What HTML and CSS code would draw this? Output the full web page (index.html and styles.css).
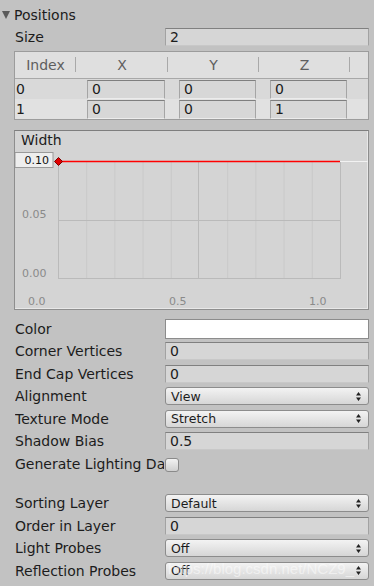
FILE: index.html
```html
<!DOCTYPE html>
<html>
<head>
<meta charset="utf-8">
<link rel="stylesheet" href="styles.css">
</head>
<body>
<div class="inspector">
  <div class="foldout"><span class="tri"></span><span>Positions</span></div>
  <div class="prop"><span class="label">Size</span><div class="field">2</div></div>

  <div class="table">
    <div class="trow head">
      <div class="hc c-idx">Index</div>
      <div class="hc c-col">X</div>
      <div class="hc c-col">Y</div>
      <div class="hc c-col">Z</div>
      <div class="c-rest"></div>
    </div>
    <div class="trow r0">
      <div class="c-idx idx">0</div>
      <div class="c-col cell"><div class="tfield">0</div></div>
      <div class="c-col cell"><div class="tfield">0</div></div>
      <div class="c-col cell"><div class="tfield">0</div></div>
      <div class="c-rest"></div>
    </div>
    <div class="trow r1">
      <div class="c-idx idx">1</div>
      <div class="c-col cell"><div class="tfield">0</div></div>
      <div class="c-col cell"><div class="tfield">0</div></div>
      <div class="c-col cell"><div class="tfield">1</div></div>
      <div class="c-rest"></div>
    </div>
  </div>

  <div class="curve">
    <div class="curve-title">Width</div>
    <svg class="graph" width="353" height="160" viewBox="0 0 353 160">
      <g stroke="#c9c9c9" stroke-width="1">
        <line x1="71.7" y1="12" x2="71.7" y2="129"/>
        <line x1="99.9" y1="12" x2="99.9" y2="129"/>
        <line x1="128.1" y1="12" x2="128.1" y2="129"/>
        <line x1="156.3" y1="12" x2="156.3" y2="129"/>
        <line x1="212.7" y1="12" x2="212.7" y2="129"/>
        <line x1="240.9" y1="12" x2="240.9" y2="129"/>
        <line x1="269.1" y1="12" x2="269.1" y2="129"/>
        <line x1="297.3" y1="12" x2="297.3" y2="129"/>
      </g>
      <g stroke="#bababa" stroke-width="1">
        <line x1="183.5" y1="12" x2="183.5" y2="129"/>
        <line x1="43.5" y1="71.5" x2="325.5" y2="71.5"/>
        <line x1="43.5" y1="12" x2="43.5" y2="129.5"/>
        <line x1="43" y1="129.5" x2="326" y2="129.5"/>
        <line x1="325.5" y1="12" x2="325.5" y2="129.5"/>
      </g>
      <line x1="325" y1="12.5" x2="353" y2="12.5" stroke="#f2f2f2" stroke-width="1"/>
      <line x1="43" y1="12.5" x2="325" y2="12.5" stroke="#ff0000" stroke-width="1.3"/>
      <rect x="0" y="3.5" width="38" height="15" fill="#eeeeee" stroke="#9a9a9a" stroke-width="1"/>
      <text x="34" y="15" text-anchor="end" class="tick-dark">0.10</text>
      <path d="M43.5 8.5 L47.5 12.5 L43.5 16.5 L39.5 12.5 Z" fill="#e00000" stroke="#7a0000" stroke-width="1"/>
      <text x="7" y="69" class="tick">0.05</text>
      <text x="7" y="128" class="tick">0.00</text>
      <text x="13" y="156" class="tick">0.0</text>
      <text x="154" y="156" class="tick">0.5</text>
      <text x="294" y="156" class="tick">1.0</text>
    </svg>
  </div>

  <div class="props">
    <div class="prop"><span class="label">Color</span><div class="field color"></div></div>
    <div class="prop"><span class="label">Corner Vertices</span><div class="field">0</div></div>
    <div class="prop"><span class="label">End Cap Vertices</span><div class="field">0</div></div>
    <div class="prop"><span class="label">Alignment</span><div class="popup"><span>View</span><svg class="arrows" width="5" height="9" viewBox="0 0 5 9"><path d="M2.5 0 L5 3.5 L0 3.5 Z M0 5.5 L5 5.5 L2.5 9 Z" fill="#222"/></svg></div></div>
    <div class="prop"><span class="label">Texture Mode</span><div class="popup"><span>Stretch</span><svg class="arrows" width="5" height="9" viewBox="0 0 5 9"><path d="M2.5 0 L5 3.5 L0 3.5 Z M0 5.5 L5 5.5 L2.5 9 Z" fill="#222"/></svg></div></div>
    <div class="prop"><span class="label">Shadow Bias</span><div class="field">0.5</div></div>
    <div class="prop"><span class="label">Generate Lighting Data</span><div class="check"></div></div>
    <div class="spacer"></div>
    <div class="prop"><span class="label">Sorting Layer</span><div class="popup"><span>Default</span><svg class="arrows" width="5" height="9" viewBox="0 0 5 9"><path d="M2.5 0 L5 3.5 L0 3.5 Z M0 5.5 L5 5.5 L2.5 9 Z" fill="#222"/></svg></div></div>
    <div class="prop"><span class="label">Order in Layer</span><div class="field">0</div></div>
    <div class="prop"><span class="label">Light Probes</span><div class="popup"><span>Off</span><svg class="arrows" width="5" height="9" viewBox="0 0 5 9"><path d="M2.5 0 L5 3.5 L0 3.5 Z M0 5.5 L5 5.5 L2.5 9 Z" fill="#222"/></svg></div></div>
    <div class="prop"><span class="label">Reflection Probes</span><div class="popup"><span>Off</span><svg class="arrows" width="5" height="9" viewBox="0 0 5 9"><path d="M2.5 0 L5 3.5 L0 3.5 Z M0 5.5 L5 5.5 L2.5 9 Z" fill="#222"/></svg></div></div>
  </div>
</div>
<div class="watermark">https://blog.csdn.net/NCZ9_</div>
</body>
</html>
```
FILE: styles.css
```css
html, body {
  margin: 0;
  padding: 0;
}
body {
  background: #c2c2c2;
  font-family: "DejaVu Sans", sans-serif;
  font-size: 14px;
  color: #1c1c1c;
  width: 374px;
  height: 586px;
  overflow: hidden;
  position: relative;
}
.inspector {
  display: flex;
  flex-direction: column;
}
.foldout {
  height: 22px;
  margin-top: 4px;
  display: flex;
  align-items: center;
  padding-left: 2px;
}
.tri {
  width: 0;
  height: 0;
  border-left: 4.5px solid transparent;
  border-right: 4.5px solid transparent;
  border-top: 8px solid #5a5a5a;
  margin-right: 4px;
}
.prop {
  display: flex;
  align-items: center;
  height: 22.5px;
  padding-left: 15px;
  padding-right: 5px;
}
.label {
  width: 149px;
  margin-right: 1px;
  flex: none;
  white-space: nowrap;
  overflow: hidden;
}
.field {
  flex: 1;
  height: 18px;
  box-sizing: border-box;
  background: #d6d6d6;
  border: 1px solid #a2a2a2;
  border-top-color: #808080;
  border-bottom-color: #c8c8c8;
  padding-left: 4px;
  display: flex;
  align-items: center;
}
.field.color {
  background: #ffffff;
  height: 20px;
  border-color: #8c8c8c;
}
.popup {
  flex: 1;
  height: 18px;
  box-sizing: border-box;
  border: 1px solid #8c8c8c;
  border-radius: 3px;
  background: linear-gradient(#f3f3f3, #d6d6d6);
  font-size: 12.5px;
  padding: 0 7px 0 5px;
  display: flex;
  align-items: center;
  justify-content: space-between;
}
.arrows {
  display: block;
}
.check {
  width: 14px;
  height: 14px;
  box-sizing: border-box;
  border: 1px solid #8a8a8a;
  border-radius: 3px;
  background: linear-gradient(#f2f2f2, #cfcfcf);
  margin-top: 3px;
}
.spacer {
  height: 17px;
}

/* table */
.table {
  margin: 2px 5px 0 14px;
  border: 1px solid #9c9c9c;
  background: #dfdfdf;
}
.trow {
  display: flex;
}
.trow.head {
  height: 26px;
  border-bottom: 1px solid #a8a8a8;
  background: #dfdfdf;
  color: #5e5e5e;
}
.trow.r0 {
  height: 20px;
  background: #d9d9d9;
}
.trow.r1 {
  height: 20px;
  background: #e1e1e1;
}
.c-idx {
  width: 61px;
  flex: none;
}
.c-col {
  width: 91px;
  flex: none;
}
.c-col:nth-child(2) {
  width: 92px;
}
.c-rest {
  flex: 1;
}
.hc {
  display: flex;
  align-items: center;
  justify-content: center;
  background: linear-gradient(#a9a9a9, #a9a9a9) right center / 1px 15px no-repeat;
}
.idx {
  display: flex;
  align-items: center;
  padding-left: 1px;
  box-sizing: border-box;
}
.cell {
  box-sizing: border-box;
  padding: 1px 3px 0 11px;
}
.tfield {
  height: 19px;
  box-sizing: border-box;
  background: #d7d7d7;
  border: 1px solid #a5a5a5;
  border-top-color: #7f7f7f;
  border-bottom-color: #ececec;
  padding-left: 4px;
  display: flex;
  align-items: center;
}

/* curve */
.curve {
  margin: 10px 5px 8px 14px;
  height: 180px;
  box-sizing: border-box;
  border: 1px solid #8e8e8e;
  border-top-color: #7e7e7e;
  background: #d4d4d4;
  box-shadow: inset -1px -1px 0 #e8e8e8;
  display: flex;
  flex-direction: column;
}
.curve-title {
  height: 18px;
  padding-left: 6px;
  display: flex;
  align-items: center;
}
.graph {
  display: block;
}
.tick {
  font-family: "DejaVu Sans", sans-serif;
  font-size: 11px;
  fill: #8a8a8a;
}
.tick-dark {
  font-family: "DejaVu Sans", sans-serif;
  font-size: 11px;
  fill: #111;
}
.watermark {
  position: absolute;
  right: 20px;
  top: 560px;
  font-family: "Liberation Sans", sans-serif;
  font-size: 15px;
  color: rgba(255, 255, 255, 0.5);
  white-space: nowrap;
}
```
